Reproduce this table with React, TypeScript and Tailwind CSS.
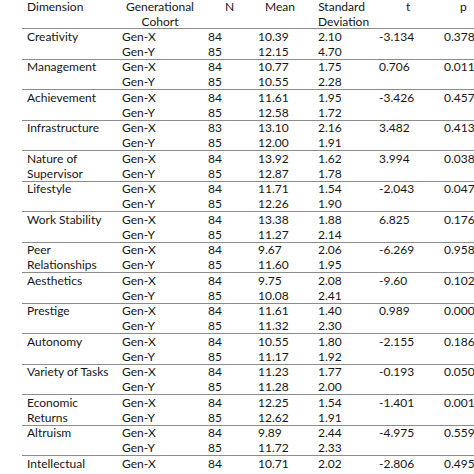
type Group = {
  dim: string[];
  x: [string, string, string, string, string];
  y?: [string, string, string];
};

const GROUPS: Group[] = [
  { dim: ["Creativity"], x: ["84", "10.39", "2.10", "-3.134", "0.378"], y: ["85", "12.15", "4.70"] },
  { dim: ["Management"], x: ["84", "10.77", "1.75", "0.706", "0.011"], y: ["85", "10.55", "2.28"] },
  { dim: ["Achievement"], x: ["84", "11.61", "1.95", "-3.426", "0.457"], y: ["85", "12.58", "1.72"] },
  { dim: ["Infrastructure"], x: ["83", "13.10", "2.16", "3.482", "0.413"], y: ["85", "12.00", "1.91"] },
  { dim: ["Nature of", "Supervisor"], x: ["84", "13.92", "1.62", "3.994", "0.038"], y: ["85", "12.87", "1.78"] },
  { dim: ["Lifestyle"], x: ["84", "11.71", "1.54", "-2.043", "0.047"], y: ["85", "12.26", "1.90"] },
  { dim: ["Work Stability"], x: ["84", "13.38", "1.88", "6.825", "0.176"], y: ["85", "11.27", "2.14"] },
  { dim: ["Peer", "Relationships"], x: ["84", "9.67", "2.06", "-6.269", "0.958"], y: ["85", "11.60", "1.95"] },
  { dim: ["Aesthetics"], x: ["84", "9.75", "2.08", "-9.60", "0.102"], y: ["85", "10.08", "2.41"] },
  { dim: ["Prestige"], x: ["84", "11.61", "1.40", "0.989", "0.000"], y: ["85", "11.32", "2.30"] },
  { dim: ["Autonomy"], x: ["84", "10.55", "1.80", "-2.155", "0.186"], y: ["85", "11.17", "1.92"] },
  { dim: ["Variety of Tasks"], x: ["84", "11.23", "1.77", "-0.193", "0.050"], y: ["85", "11.28", "2.00"] },
  { dim: ["Economic", "Returns"], x: ["84", "12.25", "1.54", "-1.401", "0.001"], y: ["85", "12.62", "1.91"] },
  { dim: ["Altruism"], x: ["84", "9.89", "2.44", "-4.975", "0.559"], y: ["85", "11.72", "2.33"] },
  // only the first line of this block is on screen
  { dim: ["Intellectual"], x: ["84", "10.71", "2.02", "-2.806", "0.495"] },
];

const cols = "grid grid-cols-[100px_68px_32px_96px_61px_65px_1fr]";

function Row({ dim, cohort, vals }: { dim?: string; cohort: string; vals: string[] }) {
  return (
    <div className={`${cols} h-[15.3px] leading-[15.3px] whitespace-nowrap`}>
      <div className="pl-[5px]">{dim}</div>
      <div>{cohort}</div>
      <div className="text-right">{vals[0]}</div>
      <div className="pl-[36px]">{vals[1]}</div>
      <div>{vals[2]}</div>
      <div>{vals[3] ?? ""}</div>
      <div>{vals[4] ?? ""}</div>
    </div>
  );
}

export default function App() {
  return (
    <div
      className="h-[474px] w-[474px] overflow-hidden bg-white pl-[22px] text-[12px] text-[#161616]"
      style={{ fontFamily: "Lato, 'Open Sans', sans-serif" }}
    >
      <div className="h-[29.5px]">
        <div className={`${cols} -mt-[1.5px] leading-[15.3px] whitespace-nowrap`}>
          <div className="pl-[5px]">Dimension</div>
          <div className="col-span-2 pr-[24px] text-center">
            Generational
            <br />
            Cohort
          </div>
          <div className="flex justify-between pl-[3px] pr-[23px]">
            <span>N</span>
            <span>Mean</span>
          </div>
          <div className="w-[47px] text-center">
            Standard
            <br />
            Deviation
          </div>
          <div className="pl-[27px]">t</div>
          <div className="pl-[16px]">p</div>
        </div>
      </div>
      {GROUPS.map((g) => (
        <div key={g.dim.join(" ")} className="h-[30.5px] border-t-[1.5px] border-[#8c8c8c]">
          <div className="-mt-[0.5px]">
            <Row dim={g.dim[0]} cohort="Gen-X" vals={g.x} />
            {g.y && <Row dim={g.dim[1]} cohort="Gen-Y" vals={g.y} />}
          </div>
        </div>
      ))}
    </div>
  );
}
